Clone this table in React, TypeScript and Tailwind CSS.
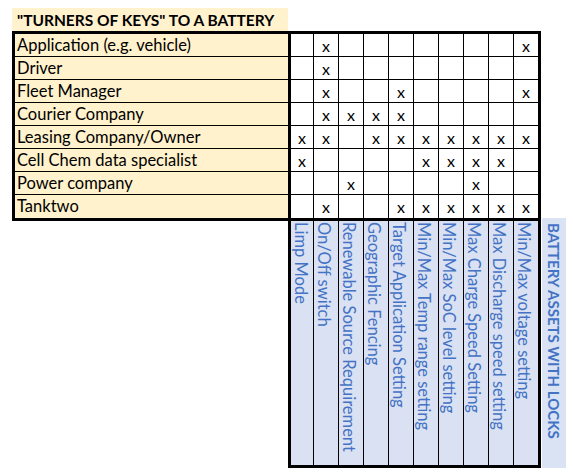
const labels = [
  "Application (e.g. vehicle)",
  "Driver",
  "Fleet Manager",
  "Courier Company",
  "Leasing Company/Owner",
  "Cell Chem data specialist",
  "Power company",
  "Tanktwo",
];

const marks: number[][] = [
  [2, 10],
  [2],
  [2, 5, 10],
  [2, 3, 4, 5],
  [1, 2, 4, 5, 6, 7, 8, 9, 10],
  [1, 6, 7, 8, 9],
  [3, 8],
  [2, 5, 6, 7, 8, 9, 10],
];

const cols = [
  "Limp Mode",
  "On/Off switch",
  "Renewable Source Requirement",
  "Geographic Fencing",
  "Target Application Setting",
  "Min/Max Temp range setting",
  "Min/Max SoC level setting",
  "Max Charge Speed Setting",
  "Max Discharge speed setting",
  "Min/Max voltage setting",
];

export default function App() {
  return (
    <div className="min-h-[475px] w-[573px] bg-white pt-[8px] pl-[12px] font-['Lato',sans-serif] text-black">
      <div className="h-[23px] w-[276px] bg-[#fff2cc] pl-[5px] text-[15.5px] font-bold leading-[24px]">
        "TURNERS OF KEYS" TO A BATTERY
      </div>
      <div className="w-[529px] border-[3px] border-black">
        {labels.map((l, i) => (
          <div key={l} className={i < 7 ? "flex h-[23px] border-b border-black" : "flex h-[23px]"}>
            <div className="w-[276px] border-r-[3px] border-black bg-[#fff2cc] pl-[2px] text-[16.5px] leading-[22px]">
              {l}
            </div>
            {cols.map((_, j) => (
              <div
                key={j}
                className={
                  j === 0
                    ? "flex w-[22px] items-center justify-center pt-[1px] text-[16px] leading-[20px]"
                    : "flex w-[25px] items-center justify-center border-l border-black pt-[1px] text-[16px] leading-[20px]"
                }
              >
                {marks[i].includes(j + 1) ? "x" : ""}
              </div>
            ))}
          </div>
        ))}
      </div>
      <div className="flex items-start">
        <div className="ml-[276px] flex h-[247px] w-[253px] border-x-[3px] border-b-[3px] border-black">
          {cols.map((c, j) => (
            <div
              key={c}
              className={
                j === 0
                  ? "flex w-[22px] bg-[#d9e1f2] pt-[1px]"
                  : "flex w-[25px] border-l border-black bg-[#d9e1f2] pt-[1px]"
              }
            >
              <span className="text-[16.5px] leading-[20px] text-[#4472c4] [writing-mode:vertical-rl]">{c}</span>
            </div>
          ))}
        </div>
        <div className="-mt-[3px] ml-[1px] flex h-[250px] w-[24px] bg-[#dae3f3] pt-[5px] pl-[2px]">
          <span className="text-[15px] font-bold leading-[20px] text-[#4472c4] [writing-mode:vertical-rl]">
            BATTERY ASSETS WITH LOCKS
          </span>
        </div>
      </div>
    </div>
  );
}
